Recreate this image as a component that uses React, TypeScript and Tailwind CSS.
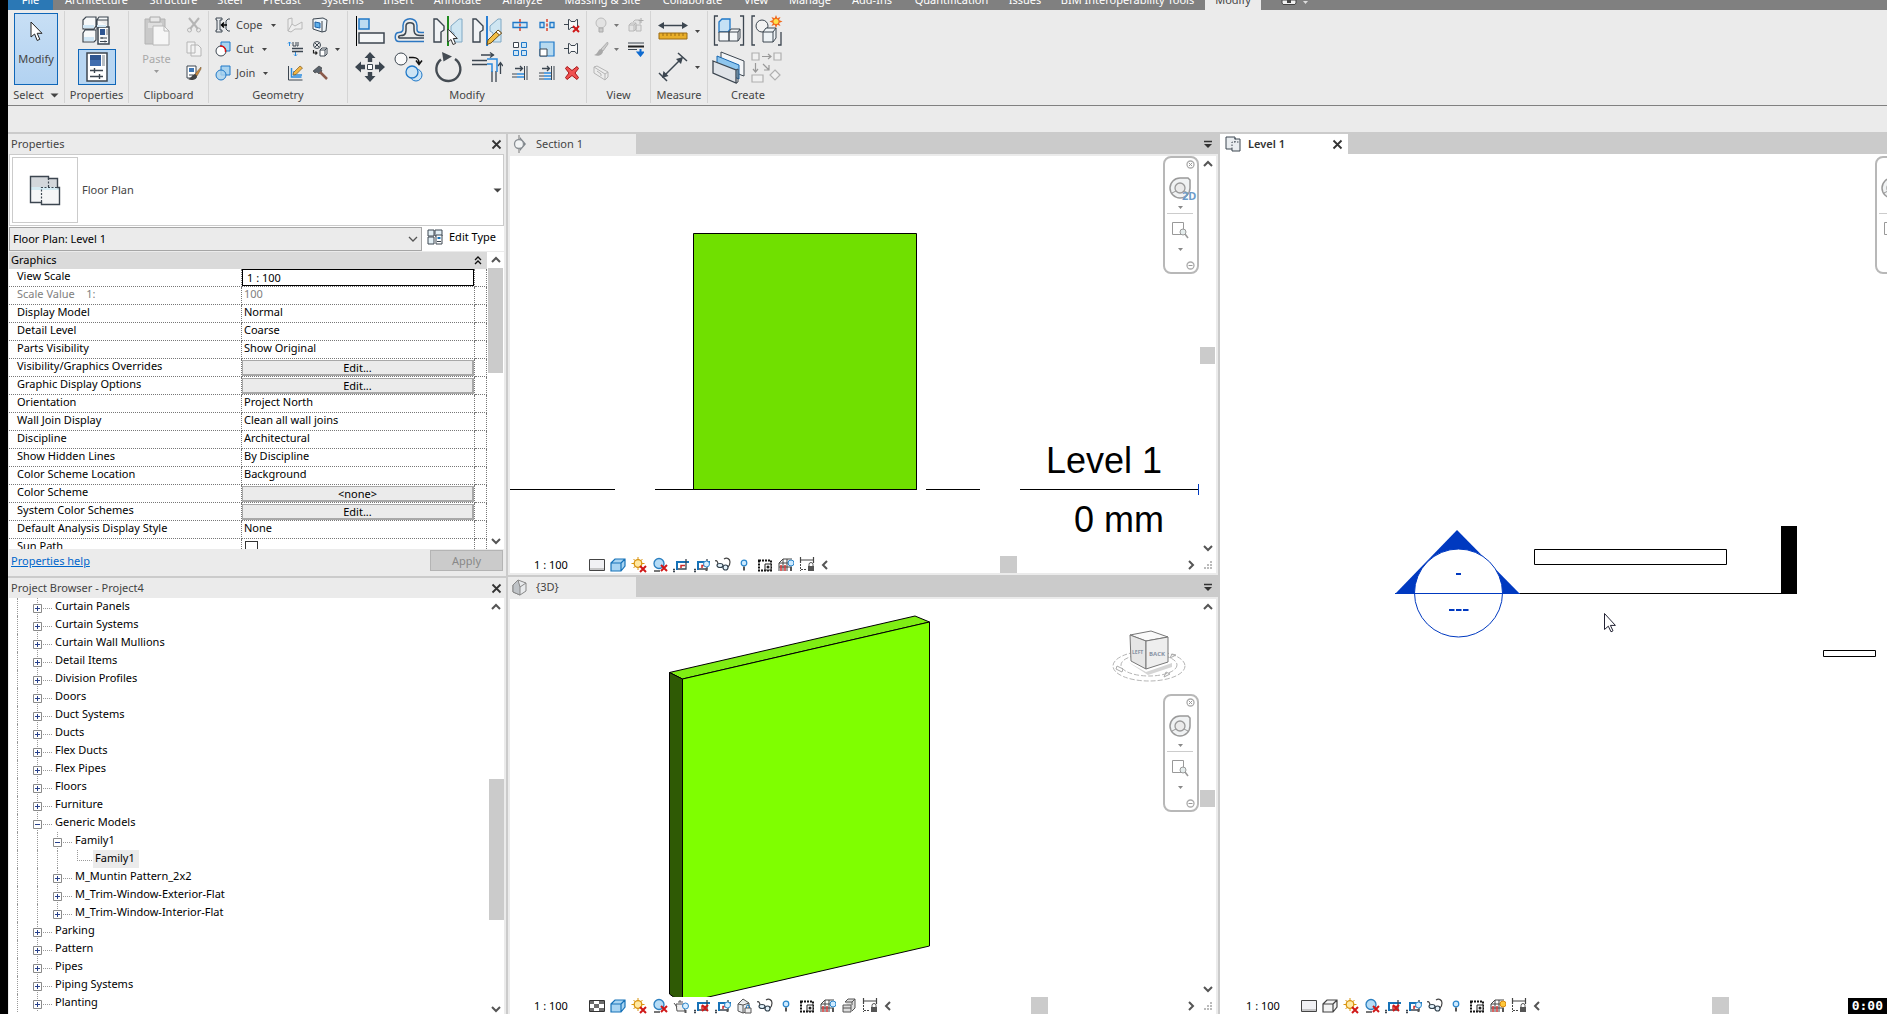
import { Fragment, type ReactNode } from "react"
import clsx from "clsx"

const INK = "#3c4650"
const BLUE = "#1f78c8"
const PALE = "#cfe6f5"

/* ---------- Icon helpers ---------- */

function Icon({ w = 16, h = 16, children }: { w?: number; h?: number; children: ReactNode }) {
  return (
    <svg width={w} height={h} viewBox={`0 0 ${w} ${h}`} fill="none" aria-hidden="true" className="block shrink-0">
      {children}
    </svg>
  )
}

const Caret = ({ color = "#444", big = false }: { color?: string; big?: boolean }) => (
  <Icon w={big ? 9 : 7} h={5}>
    <path d={big ? "M.5 .5h8l-4 4z" : "M1 1h5L3.5 4z"} fill={color} />
  </Icon>
)

const CloseIcon = () => (
  <Icon w={11} h={11}>
    <path d="M1.5 1.5l8 8M9.5 1.5l-8 8" stroke="#333" strokeWidth="1.800" />
  </Icon>
)

const chevrons = {
  up: "M2 8l4-4 4 4",
  down: "M2 4l4 4 4-4",
  left: "M8 2L4 6l4 4",
  right: "M4 2l4 4-4 4",
}

function ScrollArrow({ dir }: { dir: keyof typeof chevrons }) {
  return (
    <button type="button" aria-label={`Scroll ${dir}`} className="flex size-4 shrink-0 items-center justify-center">
      <Icon w={12} h={12}>
        <path d={chevrons[dir]} stroke="#555" strokeWidth="2" />
      </Icon>
    </button>
  )
}

const RedX = ({ x, y, s = 6 }: { x: number; y: number; s?: number }) => (
  <path d={`M${x} ${y}l${s} ${s}M${x + s} ${y}l${-s} ${s}`} stroke="#d01818" strokeWidth="2" />
)

/* ---------- Ribbon icons ---------- */

const ArrowCursor = () => (
  <Icon w={14} h={22}>
    <path d="M2 1v15l3.6-3 2.6 6.500 2.6-1.200-2.600-6H13z" fill="#fff" stroke="#222" />
  </Icon>
)

const TypeProperties = () => (
  <Icon w={32} h={32}>
    <g fill="#f7f9fa" stroke={INK} strokeWidth="1.2">
      <path d="M2 5l3-3h10v9l-2 3H2zM16 5l2-3h9v9M16 5v9h11V5zM2 18l2-3h11v10l-2 2H2z" />
      <path d="M17 12h11v17H17z" strokeWidth="1.5" />
    </g>
    <path d="M2 10h11v3H2zM16 10h9v2h-9zM3 22h10v4H3z" fill={PALE} />
    <path d="M19 14h5v6h-5z" fill="#2e5591" />
    <path d="M25 14h2v6h-2z" fill="#bbb" />
    <path d="M19 23h7M19 26.500h7M21 22v2M24 25.500v2" stroke={INK} />
  </Icon>
)

const PropertiesSheet = () => (
  <Icon w={22} h={30}>
    <path d="M1 1h20v28H1z" fill="#fff" stroke={INK} strokeWidth="1.5" />
    <path d="M4 3h11v11H4z" fill="#2e5591" />
    <path d="M4 8h11v6H4z" fill="#3f6cae" />
    <path d="M16 3h3v11h-3z" fill="#b9bfc5" />
    <path d="M4 18.500h13M4 24.500h13M8.500 16v5M13.500 22v5" stroke={INK} strokeWidth="1.400" />
  </Icon>
)

const PasteIcon = () => (
  <Icon w={28} h={32}>
    <path d="M2 4h20v25H2z" fill="#c9c9c9" stroke="#b3b3b3" />
    <path d="M7 2h10v5H7z" fill="#e8e8e8" stroke="#aaa" />
    <path d="M5 8h14v5H5z" fill="#dedede" />
    <path d="M10 11h11l5 5v14H10z" fill="#f6f6f6" stroke="#b8b8b8" />
    <path d="M21 11v5h5" stroke="#b8b8b8" />
  </Icon>
)

const CutClip = () => (
  <Icon>
    <path d="M3 1l9 11M13 1L4 12" stroke="#b5b5b5" strokeWidth="2" />
    <circle cx="3.500" cy="13" r="2" stroke="#b5b5b5" />
    <circle cx="12.500" cy="13" r="2" stroke="#b5b5b5" />
  </Icon>
)

const CopyClip = () => (
  <Icon>
    <path d="M1 1h8v11H1zM5 4h7l3 3v8H5z" fill="#f3f3f3" stroke="#b5b5b5" />
  </Icon>
)

const MatchType = () => (
  <Icon>
    <path d="M1 1h9v12H1z" fill="#fff" stroke={INK} />
    <path d="M3 3h5v4H3z" fill="#3f77b5" />
    <path d="M3 10h4" stroke={INK} />
    <path d="M15 2L9 9l2 2 4-7z" fill="#c9893e" stroke="#6b5030" strokeWidth=".5" />
    <path d="M9 9c-3 0-3 4-7 5 3 2 9 1 9-3z" fill="#444" />
  </Icon>
)

const CopeIcon = () => (
  <Icon>
    <path d="M1 1h6v2H5v10h2v2H1v-2h1V3H1z" fill="#e6e9ec" stroke={INK} />
    <path d="M15 2h-2l-2 2v8l2 2h2" stroke={INK} />
    <path d="M12 8H7M9 5.500L6.500 8 9 10.500" stroke="#000" strokeWidth="1.500" />
  </Icon>
)

const CutGeo = () => (
  <Icon>
    <path d="M6 1h9v9H6z" fill="#a9d3ef" stroke={BLUE} />
    <circle cx="6" cy="10" r="5" fill="#fff" stroke={INK} />
    <path d="M5 5a5 5 0 015.500 6" stroke="#e01010" strokeWidth="1.500" />
  </Icon>
)

const JoinGeo = () => (
  <Icon>
    <path d="M6 1h9v9H6z" fill="#a9d3ef" stroke={BLUE} />
    <circle cx="6" cy="10" r="5" fill="#a9d3ef" fillOpacity=".8" stroke={BLUE} />
  </Icon>
)

const JoinRoof = () => (
  <Icon>
    <path d="M1 2l4-1v6l3 2 7-4v7H8l-4 3-3-1zM5 7l-4 7" fill="#eee" stroke="#b8b8b8" />
  </Icon>
)

const BeamJoins = () => (
  <Icon>
    <path d="M2.500 5V1M1 2.500L2.500 1 4 2.500M8.500 11v4M7 13.500L8.500 15l1.500-1.500" stroke="#2a8be0" />
    <path d="M6 1v4h3V1M11 1v4h-1" stroke={INK} />
    <path d="M5 7.500h11M5 10.500h11" stroke={INK} strokeWidth="1.500" />
  </Icon>
)

const WallJoins = () => (
  <Icon>
    <path d="M1.500 1v14h14" stroke={INK} />
    <path d="M4.500 3v9h10M7 6v4h8" stroke="#2a8be0" strokeWidth="1.500" />
    <path d="M13 1l2.500 2L9 9.500l-3 .5.500-2.500z" fill="#f2b544" stroke="#7c5a20" strokeWidth=".7" />
  </Icon>
)

const WallOpening = () => (
  <Icon>
    <path d="M1 2l10-1 4 2-1 11-4 1-9-3z" fill="#eef4f8" stroke={INK} />
    <path d="M10 4v11" stroke={INK} />
    <path d="M3 5l5 1v5l-5-1z" fill="#5fb0ea" stroke="#1c5fa5" />
  </Icon>
)

const Unjoin = () => (
  <Icon>
    <circle cx="5" cy="4" r="3.500" stroke={INK} />
    <path d="M3 2l4 4M7 2L3 6" stroke={INK} />
    <path d="M1.500 9v3h3M3.500 10.500L5 12l-1.500 1.500" stroke="#222" strokeWidth="1.200" />
    <path d="M8 9l2-2h5v6l-2 2H8zM8 9h5v6M13 9l2-2" fill="#fff" stroke={INK} />
  </Icon>
)

const Demolish = () => (
  <Icon>
    <path d="M1 6l6-5 3 2-1 1 1 2-3 3-2-2-2 1z" fill="#59626b" stroke="#333" strokeWidth=".6" />
    <path d="M8 7l7 7" stroke="#8a5a4a" strokeWidth="2.500" />
  </Icon>
)

const AlignIcon = () => (
  <Icon w={30} h={32}>
    <path d="M1.500 1v30" stroke="#000" />
    <path d="M4 4h10v10H4z" fill="#bcdcf2" stroke={BLUE} strokeWidth="1.500" />
    <path d="M4 18h25v10H4z" fill="#f4f6f7" stroke={INK} strokeWidth="1.500" />
  </Icon>
)

const OffsetIcon = () => (
  <Icon w={32} h={32}>
    <path d="M31 26.500H6c-5 0-5-9 0-9 5 0 4-4 4-7 0-9 14-9 14 0 0 4-1 7 4 7h3" stroke="#2c77c2" strokeWidth="1.500" />
    <path d="M31 23H7c-2 0-2-2.500 1-2.500 6 0 5-5 5-9.500s8-4.500 8 0-1 9.500 6 9.500h4" stroke={INK} strokeWidth="1.500" />
  </Icon>
)

const MirrorPick = () => (
  <Icon w={32} h={32}>
    <path d="M2 4h3l7 7v4l-3 2v10H2z" fill="#f1f3f5" stroke={INK} strokeWidth="1.400" />
    <path d="M30 4h-3l-8 7v5l3 2v9h8z" fill="#cfe6f2" stroke="#7fa8c4" />
    <path d="M16 1v30" stroke="#1f8a1f" strokeWidth="2" />
    <path d="M16 14v13l3-2.500 2 5 2.500-1-2.200-5h4z" fill="#fff" stroke="#333" />
  </Icon>
)

const MirrorDraw = () => (
  <Icon w={32} h={32}>
    <path d="M2 4h3l7 7v4l-3 2v10H2z" fill="#f1f3f5" stroke={INK} strokeWidth="1.400" />
    <path d="M30 4h-3l-8 7v5l3 2v9h8z" fill="#cfe6f2" stroke="#7fa8c4" />
    <path d="M16 1v30" stroke="#2a7fd4" strokeWidth="2" />
    <path d="M27 15l3.500 3L20 28l-4 1.500 1-4.500z" fill="#f3bf45" stroke="#6e4e18" />
    <path d="M27 15l3.500 3-2 2-3.500-3z" fill="#fff" stroke="#6e4e18" />
  </Icon>
)

const MoveIcon = () => (
  <Icon w={32} h={32}>
    <path
      d="M16 1l5.500 6h-3.300v4h-4.400V7h-3.300zM16 31l5.500-6h-3.300v-4h-4.400v4h-3.300zM1 16l6-5.500v3.300h4v4.400H7v3.300zM31 16l-6-5.500v3.300h-4v4.400h4v3.300z"
      fill={INK}
    />
    <path d="M13.500 13.500h5v5h-5z" fill="#fff" stroke={INK} />
  </Icon>
)

const CopyIcon = () => (
  <Icon w={32} h={32}>
    <circle cx="8" cy="8" r="6" fill="#fafafa" stroke={INK} />
    <path d="M16 6.500h4c5 0 6 2 6 6M23 9.500l3 4 3-4" stroke="#111" strokeWidth="1.500" />
    <circle cx="23" cy="24" r="6" fill="#cce4f5" stroke={BLUE} />
    <circle cx="19" cy="21" r="6" fill="#cce4f5" stroke={BLUE} strokeWidth="1.300" />
  </Icon>
)

const RotateIcon = () => (
  <Icon w={32} h={32}>
    <path d="M9 8.500A12 12 0 1023 8" stroke="#454c53" strokeWidth="2.400" />
    <path d="M10 1l10 4.500-8.500 5z" fill="#454c53" />
  </Icon>
)

const TrimCorner = () => (
  <Icon w={32} h={32}>
    <path d="M1 9.500h15M1 13.500h15" stroke={INK} strokeWidth="1.400" />
    <path d="M10 4h13M19 1.500L22.500 4 19 6.500M29.500 23V12M27 15l2.500-3.500L32 15M21 20v11M25 20v11" stroke={INK} strokeWidth="1.300" />
    <path d="M16 8h10v13M16 13h5v8" stroke="#2a8be0" strokeWidth="1.500" />
  </Icon>
)

const SplitIcon = ({ gap = false }: { gap?: boolean }) => (
  <Icon>
    <path d={gap ? "M1 5.500h4v5H1zM11 5.500h4v5h-4z" : "M1 5.500h14v5H1z"} fill={PALE} stroke={BLUE} strokeWidth="1.300" />
    <path d="M8 2v12" stroke="#d9432f" strokeWidth="1.500" strokeDasharray="3 1.500" />
  </Icon>
)

const ArrayIcon = () => (
  <Icon>
    <path d="M1.500 1.500h5v5h-5z" stroke={INK} fill="#fff" />
    <path d="M9.500 1.500h5v5h-5zM1.500 9.500h5v5h-5zM9.500 9.500h5v5h-5z" fill={PALE} stroke={BLUE} />
  </Icon>
)

const ScaleIcon = () => (
  <Icon>
    <path d="M1 1h14v14H1z" fill="#b7daf0" stroke={BLUE} strokeWidth="1.200" />
    <path d="M1 8h7v7H1z" fill="#fff" stroke={INK} />
  </Icon>
)

const TrimExtend = ({ multi = false }: { multi?: boolean }) => (
  <Icon>
    <path d="M3 3.500h7M8 1l2.500 2.500L8 6" stroke={INK} strokeWidth="1.300" />
    <path d={multi ? "M0 8h5M0 11h5M0 14h5" : "M0 9h5M0 12h5"} stroke={INK} />
    <path d={multi ? "M5 8h7M5 11h7M5 14h7" : "M5 9h7M5 12h7"} stroke="#2a8be0" strokeWidth="1.300" />
    <path d="M12.500 1v14M15 1v14" stroke={INK} />
  </Icon>
)

const PinIcon = ({ off = false }: { off?: boolean }) => (
  <Icon>
    <path d="M0 7.500h5" stroke={INK} />
    <path d="M4.500 2.500h1l1.500 2h4l1.500-2h1v10h-1l-1.500-2H7l-1.500 2h-1z" fill="#f6f6f6" stroke={INK} />
    {off && <RedX x={9} y={9} s={6} />}
  </Icon>
)

const DeleteIcon = () => (
  <Icon>
    <path d="M3 1.500l5 4 5-4 1.500 2L11 8l3.500 4.500-1.500 2-5-4-5 4-1.500-2L5 8 1.500 3.500z" fill="#f05050" stroke="#a51515" />
  </Icon>
)

const GrayBulb = () => (
  <Icon>
    <circle cx="8" cy="6" r="5" fill="#e3e3e3" stroke="#bcbcbc" />
    <path d="M6 11h4v4H6z" fill="#ccc" stroke="#aaa" />
  </Icon>
)

const GrayBrush = () => (
  <Icon>
    <path d="M14.500 1L8 8l2 2 5-7z" fill="#ccc" stroke="#b0b0b0" />
    <path d="M8 8c-3 0-3 5-7 6 4 2 9 0 9-4z" fill="#a8a8a8" />
  </Icon>
)

const GrayWall = () => (
  <Icon>
    <path d="M1 2l3-1 11 6v5l-3 3-11-7zM1 2l11 7v6M12 9l3-2M4 6l4 3v2" fill="#ececec" stroke="#b5b5b5" />
  </Icon>
)

const GrayBoxes = () => (
  <Icon>
    <path d="M1 8l2-2h5v6l-2 2H1zM1 8h5v6M6 8l2-2M8 8h5v6H8zM5 5l2-2h5v4" fill="#e4e4e4" stroke="#b8b8b8" />
    <path d="M13 1v5M10.500 3.500h5" stroke="#aaa" />
  </Icon>
)

const LineworkIcon = () => (
  <Icon>
    <path d="M0 2h16" stroke={INK} />
    <path d="M0 5.500h16" stroke="#222" strokeWidth="2" />
    <path d="M0 8.500h9" stroke={INK} />
    <path d="M12.500 8v6M10 11.500l2.500 3 2.500-3z" stroke="#0f6bd0" strokeWidth="2" />
  </Icon>
)

const MeasureIcon = () => (
  <Icon w={30} h={28}>
    <path d="M3 8.500h24" stroke={INK} strokeWidth="1.500" />
    <path d="M0 8.500L6 5v7zM30 8.500L24 5v7z" fill={INK} />
    <path d="M1 16h28v6H1z" fill="#e9ae28" stroke="#9b6a12" />
    <path d="M5 16v3M9 16v3M13 16v3M17 16v3M21 16v3M25 16v3" stroke="#9b6a12" />
  </Icon>
)

const DimensionIcon = () => (
  <Icon w={30} h={30}>
    <path d="M5 25L24 6M1 21l8 8M20 1l9 8" stroke={INK} strokeWidth="1.500" />
    <path d="M4 26l1.500-7 5 5zM25 5l-7 2 5 5z" fill={INK} />
  </Icon>
)

const CreateGroup = () => (
  <Icon w={32} h={32}>
    <path d="M5 1H1.500v29H5M27 1h3.500v29H27" stroke={INK} strokeWidth="1.300" />
    <path d="M6 7l3-3h8v10l-2 3H6z" fill="#c4e1f5" stroke={BLUE} strokeWidth="1.300" />
    <path d="M6 17h10v9H6zM16 17l2-3h9v9l-2 3h-9z" fill="#f3f6f8" stroke={INK} />
    <path d="M16 17h9v9M25 17l2-3" stroke={INK} />
  </Icon>
)

const CreateAssembly = () => (
  <Icon w={32} h={32}>
    <path d="M4 1H1v29h3M27 30h3V17" stroke={INK} strokeWidth="1.300" />
    <circle cx="11" cy="11" r="6" fill="#f2f2f2" stroke={INK} />
    <path d="M12 17l3-4h10v10l-3 4H12zM12 17h10v10M22 17l3-4" fill="#eef3f6" stroke={INK} />
    <path d="M25 0l1.300 3.200L29.500 2 28 5l3.500 1.500L28 8l1.500 3-3.200-1.200L25 13l-1.300-3.200L20.500 11 22 8l-3.500-1.500L22 5l-1.500-3 3.200 1.200z" fill="#f06a1c" />
    <circle cx="25" cy="6.500" r="2.500" fill="#ffe14a" />
  </Icon>
)

const CreateParts = () => (
  <Icon w={34} h={34}>
    <path d="M9 2l23 9v15l-3-1L9 15z" fill="#f4f6f8" stroke={INK} />
    <path d="M5 6l22 9v14L5 20z" fill="#8ec6ee" stroke="#1766b0" />
    <path d="M1 11l23 9v13L1 23z" fill="#dfe3e8" stroke={INK} strokeWidth="1.300" />
    <path d="M24 20l2-1v13l-2 1" stroke={INK} />
  </Icon>
)

const CreateSimilar = () => (
  <Icon w={32} h={32}>
    <g stroke="#b0b0b0" strokeWidth="1.200">
      <path d="M1 2h7v7H1zM23 2h7v7h-7zM1 24h11v7H1zM24 19l5 5-5 5-5-5z" fill="#f0f0f0" />
      <path d="M11 5.500h9M17 3l3 2.500L17 8M4.500 12v9M2 18l2.500 3L7 18M12 13l6 6M18 14v5h-5" stroke="#999" />
    </g>
  </Icon>
)

/* ---------- View control icons ---------- */

const DetailBox = () => (
  <Icon>
    <path d="M.5 2.500h15v11H.5z" fill="#f1f1f4" stroke="#444" />
    <path d="M1 12h14" stroke="#999" />
  </Icon>
)

const CheckerBox = () => (
  <Icon>
    <path d="M.5 2.500h15v11H.5z" fill="#fff" stroke="#333" />
    <path d="M1 3h4v3H1zM10 3h5v3h-5zM5 6h5v4H5zM1 10h4v3H1zM10 10h5v3h-5z" fill="#6d6d6d" />
  </Icon>
)

const StyleCube = ({ plain = false }: { plain?: boolean }) => (
  <Icon>
    <path
      d="M1 6l4-4h10v7l-4 5H1zM1 6h10v8M11 6l4-4"
      fill={plain ? "#f4f4f4" : "#a8d4f2"}
      stroke={plain ? "#444" : "#1672b8"}
      strokeWidth="1.200"
    />
  </Icon>
)

const SunOff = () => (
  <Icon>
    <path d="M7 0v13M.5 6.500h13M2.500 2l9 9M11.500 2l-9 9" stroke="#d9940f" />
    <circle cx="7" cy="6.500" r="3.800" fill="#ffe9a3" stroke="#d9940f" strokeWidth="1.300" />
    <RedX x={9} y={9} />
  </Icon>
)

const ShadowOff = () => (
  <Icon>
    <path d="M2 14h6" stroke="#777" strokeWidth="2" />
    <circle cx="7" cy="6.500" r="5" fill="#b6dcf6" stroke="#2a7fc0" strokeWidth="1.300" />
    <RedX x={9} y={8} />
  </Icon>
)

const CropView = ({ mark }: { mark?: "x" | "bulb" }) => (
  <Icon>
    <path d="M4 13V5h12" stroke="#1672b8" strokeWidth="2" />
    <path d="M8 11V8.500h4" stroke="#cc2a2a" strokeWidth="1.500" />
    <path d="M13 2v10H5M0 12.500h2M0 14.500h2" stroke={INK} strokeWidth="1.300" />
    {mark === "x" && <RedX x={8} y={7} />}
    {mark === "bulb" && (
      <Fragment>
        <circle cx="12.500" cy="7" r="3" fill="#d8efff" stroke="#2a86cc" />
        <path d="M12.500 11v3" stroke="#555" strokeWidth="2" />
      </Fragment>
    )}
  </Icon>
)

const Glasses = () => (
  <Icon>
    <path d="M0 4c2-1 3 1 3 4M9 2c3-2 6 0 6 3 0 2-1 4-2 5" stroke="#444" strokeWidth="1.200" />
    <ellipse cx="5" cy="8.500" rx="3" ry="2" fill="#e4f2fb" stroke="#33424e" strokeWidth="1.200" />
    <ellipse cx="10.500" cy="10.500" rx="2.500" ry="2.500" fill="#e4f2fb" stroke="#33424e" strokeWidth="1.200" />
  </Icon>
)

const BlueBulb = () => (
  <Icon>
    <circle cx="8" cy="6" r="2.800" fill="#cdeaff" stroke="#2a86cc" strokeWidth="1.200" />
    <path d="M8 9.500v4" stroke="#555" strokeWidth="2" />
  </Icon>
)

const Chip = () => (
  <Icon>
    <path d="M2 3.500h12v10H2z" stroke="#111" strokeWidth="2" strokeDasharray="2 1" />
    <path d="M8 7h6v6H8z" fill="#fff" stroke="#222" />
    <circle cx="11" cy="10" r="1.500" fill="#222" />
  </Icon>
)

const FrameGrid = ({ lit = false }: { lit?: boolean }) => (
  <Icon>
    <path d="M1 14V6l4-4h9M5 14V2M9 14V2M1 6h13M1 10h13" stroke="#444" />
    <path d="M3 8v6M7 8v6" stroke="#d03030" strokeWidth="1.500" />
    <circle cx="13" cy="6" r="3" fill={lit ? "#ffc83a" : "#cdeaff"} stroke={lit ? "#d98a10" : "#2a86cc"} />
    <path d="M13 10v4" stroke="#555" strokeWidth="2" />
  </Icon>
)

const Constraints = () => (
  <Icon>
    <path d="M1.500 0v6M14.500 0v6M1.500 3h13" stroke="#444" strokeWidth="1.200" />
    <path d="M1.500 7v7M2 12.500h6" stroke="#444" strokeDasharray="2 1" />
    <path d="M9 9h6v5H9z" fill="#555" />
    <path d="M10 9V7.500a2 2 0 014 0V9" stroke="#555" />
  </Icon>
)

const Teapot = () => (
  <Icon>
    <path d="M3 6h8l1 7H4zM1 5l3 4M5 4h5M7 2v2" fill="#eee" stroke="#555" />
    <circle cx="12.500" cy="8" r="3" fill="#d8efff" stroke="#2a86cc" />
    <path d="M12.500 12v3" stroke="#555" strokeWidth="2" />
  </Icon>
)

const HouseLock = () => (
  <Icon>
    <path d="M2 6l5-5 6 4v8l-6 2-5-2zM7 7v8M2 6l5 1 6-2" fill="#e8ebee" stroke="#555" />
    <path d="M9 10h6v5H9z" fill="#eee" stroke="#555" />
    <path d="M10.500 10V8.500a1.500 1.500 0 013 0V10" stroke="#1672b8" />
  </Icon>
)

const StackedBoxes = () => (
  <Icon>
    <path d="M4 4l3-3h7v9l-3 3M4 4h7v3M11 4l3-3M2 7h8v7H2zM2 10h8" fill="#ddd" stroke="#555" />
  </Icon>
)

const SectionTabIcon = () => (
  <Icon w={16} h={18}>
    <path d="M8 2l6 7-6 7z" fill="#7f858b" />
    <path d="M7 0v18" stroke="#777" />
    <circle cx="7" cy="9" r="4.500" fill="#f1f3f4" stroke="#8b9095" strokeWidth="1.300" />
  </Icon>
)

const HouseTabIcon = () => (
  <Icon w={16} h={18}>
    <path d="M1 7l5-5 8 3v8l-6 4-7-3z" fill="#e8eaec" stroke="#888" />
    <path d="M1 7l5-5 2 7v8l-7-3z" fill="#bfc3c7" stroke="#888" />
    <path d="M8 9l6-4" stroke="#888" />
  </Icon>
)

const PlanTabIcon = () => (
  <Icon w={16} h={18}>
    <path d="M1 2h9v2h5v12H7v-2H1z" fill="#e9edf0" stroke={INK} />
    <path d="M7 14V7h8M10 3v4" stroke={INK} strokeDasharray="1.500 1.500" />
  </Icon>
)

const PlanThumb = () => (
  <Icon w={32} h={32}>
    <path d="M1.500 2.500h18v2h9v9h2v17h-18v-2h-11z" fill="#f5f6f7" />
    <path d="M2 3h17v2h9v8H2z" fill="#d3d7db" />
    <path d="M2 13h28v3H2z" fill="#d5ebf3" />
    <path d="M12.500 28.500h-11v-26h18v2h9v9h2v17h-18z" stroke={INK} strokeWidth="1.400" />
    <path d="M12.500 28V13.500H29M19.500 4v9" stroke={INK} strokeWidth="1.200" strokeDasharray="2 1.500" />
  </Icon>
)

const EditTypeIcon = () => (
  <Icon>
    <path d="M1 1h6v6H1zM8 1h7v6H8zM1 8h6v7H1z" fill="#e3eff5" stroke={INK} />
    <path d="M9 6h6v9H9z" fill="#fff" stroke={INK} />
    <path d="M10.500 8h3v2h-3z" fill="#1672b8" />
    <path d="M10 12.500h4" stroke={INK} />
  </Icon>
)

/* ---------- Ribbon ---------- */

const tabs = [
  { name: "Architecture", width: "w-[87px]" },
  { name: "Structure", width: "w-[67px]" },
  { name: "Steel", width: "w-[46px]" },
  { name: "Precast", width: "w-[58px]" },
  { name: "Systems", width: "w-[63px]" },
  { name: "Insert", width: "w-[49px]" },
  { name: "Annotate", width: "w-[69px]" },
  { name: "Analyze", width: "w-[61px]" },
  { name: "Massing & Site", width: "w-[99px]" },
  { name: "Collaborate", width: "w-[81px]" },
  { name: "View", width: "w-[46px]" },
  { name: "Manage", width: "w-[62px]" },
  { name: "Add-Ins", width: "w-[62px]" },
  { name: "Quantification", width: "w-[97px]" },
  { name: "Issues", width: "w-[50px]" },
  { name: "BIM Interoperability Tools", width: "w-[155px]" },
]

function RibbonTabs() {
  return (
    <nav className="flex h-[10px] shrink-0 items-end overflow-hidden bg-[#808080] text-white">
      <button type="button" className="w-[45px] shrink-0 bg-[#2b78b5] pb-[2px] text-center">
        File
      </button>
      {tabs.map((tab) => (
        <button key={tab.name} type="button" className={clsx("shrink-0 pb-[2px] text-center whitespace-nowrap", tab.width)}>
          {tab.name}
        </button>
      ))}
      <button type="button" className="w-14 shrink-0 bg-[#ebebeb] pb-[2px] text-center text-[#444]">
        Modify
      </button>
      <button type="button" aria-label="Ribbon display" className="ml-5 flex items-center gap-1 self-start">
        <Icon w={17} h={5}>
          <path d="M1 0v3l1 1.500h12l1-1.500V0z" fill="#f2f2f2" stroke="#444" />
          <path d="M6 0h4v3H6z" fill="#444" />
        </Icon>
        <Caret color="#ddd" />
      </button>
    </nav>
  )
}

function RibbonGroup({ title, width, children }: { title: ReactNode; width: string; children: ReactNode }) {
  return (
    <section className={clsx("flex shrink-0 flex-col pt-[3px]", width)}>
      <div className="flex h-[72px] justify-center">{children}</div>
      <h2 className="flex h-5 items-center justify-center gap-[6px] text-[#444]">{title}</h2>
    </section>
  )
}

const Divider = () => <div className="mt-px h-[92px] w-px shrink-0 bg-[#d4d4d4]" />

function Tool({ label, children, className }: { label: string; children: ReactNode; className?: string }) {
  return (
    <button type="button" aria-label={label} title={label} className={clsx("flex items-center justify-center", className)}>
      {children}
    </button>
  )
}

function GeometryRow({ label, children }: { label: string; children: ReactNode }) {
  return (
    <button type="button" className="flex items-center gap-[5px] text-[#444]">
      {children}
      <span>{label}</span>
      <span className="pl-[2px]">
        <Caret />
      </span>
    </button>
  )
}

function Ribbon() {
  return (
    <div className="flex h-24 shrink-0 overflow-hidden border-b border-[#808080]">
      <RibbonGroup title={<Fragment>Select <Caret big /></Fragment>} width="w-14">
        <button
          type="button"
          className="flex w-11 flex-col items-center gap-[8px] border border-[#0f66b8] bg-gradient-to-b from-[#c8dff5] to-[#b2d2f1] pt-[7px] text-[#444]"
        >
          <ArrowCursor />
          Modify
        </button>
      </RibbonGroup>
      <Divider />
      <RibbonGroup title="Properties" width="w-[63px]">
        <div className="grid w-[38px] grid-rows-2">
          <Tool label="Type Properties">
            <TypeProperties />
          </Tool>
          <Tool label="Properties" className="border border-[#0f66b8] bg-[#b8d6f2]">
            <PropertiesSheet />
          </Tool>
        </div>
      </RibbonGroup>
      <Divider />
      <RibbonGroup title="Clipboard" width="w-[79px]">
        <button type="button" className="flex w-[51px] flex-col items-center pt-[2px] text-[#a9a9a9]">
          <PasteIcon />
          <span className="pt-1 pb-[2px]">Paste</span>
          <Caret color="#999" />
        </button>
        <div className="grid w-6 grid-rows-3">
          <Tool label="Cut to Clipboard"><CutClip /></Tool>
          <Tool label="Copy to Clipboard"><CopyClip /></Tool>
          <Tool label="Match Type Properties"><MatchType /></Tool>
        </div>
      </RibbonGroup>
      <Divider />
      <RibbonGroup title="Geometry" width="w-[138px]">
        <div className="grid w-[68px] grid-rows-3">
          <GeometryRow label="Cope"><CopeIcon /></GeometryRow>
          <GeometryRow label="Cut"><CutGeo /></GeometryRow>
          <GeometryRow label="Join"><JoinGeo /></GeometryRow>
        </div>
        <div className="grid w-6 grid-rows-3">
          <Tool label="Join Roof"><JoinRoof /></Tool>
          <Tool label="Beam Joins"><BeamJoins /></Tool>
          <Tool label="Wall Joins"><WallJoins /></Tool>
        </div>
        <div className="grid w-[34px] grid-rows-3 pl-[5px]">
          <Tool label="Wall Opening" className="justify-start"><WallOpening /></Tool>
          <Tool label="Unjoin" className="justify-start gap-[6px]"><Unjoin /><Caret /></Tool>
          <Tool label="Demolish" className="justify-start"><Demolish /></Tool>
        </div>
      </RibbonGroup>
      <Divider />
      <RibbonGroup title="Modify" width="w-[238px]">
        <div className="grid grid-cols-[39px_39px_39px_39px] grid-rows-2">
          <Tool label="Align"><AlignIcon /></Tool>
          <Tool label="Offset"><OffsetIcon /></Tool>
          <Tool label="Mirror - Pick Axis"><MirrorPick /></Tool>
          <Tool label="Mirror - Draw Axis"><MirrorDraw /></Tool>
          <Tool label="Move"><MoveIcon /></Tool>
          <Tool label="Copy"><CopyIcon /></Tool>
          <Tool label="Rotate"><RotateIcon /></Tool>
          <Tool label="Trim to Corner"><TrimCorner /></Tool>
        </div>
        <div className="grid grid-cols-[28px_25px_25px] grid-rows-3">
          <Tool label="Split Element"><SplitIcon /></Tool>
          <Tool label="Split with Gap"><SplitIcon gap /></Tool>
          <Tool label="Unpin"><PinIcon off /></Tool>
          <Tool label="Array"><ArrayIcon /></Tool>
          <Tool label="Scale"><ScaleIcon /></Tool>
          <Tool label="Pin"><PinIcon /></Tool>
          <Tool label="Trim Single"><TrimExtend /></Tool>
          <Tool label="Trim Multiple"><TrimExtend multi /></Tool>
          <Tool label="Delete"><DeleteIcon /></Tool>
        </div>
      </RibbonGroup>
      <Divider />
      <RibbonGroup title="View" width="w-[63px]">
        <div className="grid w-[35px] grid-rows-3 pl-1">
          <Tool label="Hide in View" className="justify-start gap-1"><GrayBulb /><Caret color="#777" /></Tool>
          <Tool label="Override Graphics" className="justify-start gap-1"><GrayBrush /><Caret color="#777" /></Tool>
          <Tool label="Selection Box" className="justify-start"><GrayWall /></Tool>
        </div>
        <div className="grid w-6 grid-rows-3">
          <Tool label="Displace Elements"><GrayBoxes /></Tool>
          <Tool label="Linework"><LineworkIcon /></Tool>
        </div>
      </RibbonGroup>
      <Divider />
      <RibbonGroup title="Measure" width="w-14">
        <div className="grid grid-rows-2">
          <Tool label="Measure" className="gap-[6px]"><MeasureIcon /><Caret /></Tool>
          <Tool label="Dimension" className="gap-[6px]"><DimensionIcon /><Caret /></Tool>
        </div>
      </RibbonGroup>
      <Divider />
      <RibbonGroup title="Create" width="w-20">
        <div className="grid grid-cols-[38px_38px] grid-rows-2">
          <Tool label="Create Group"><CreateGroup /></Tool>
          <Tool label="Create Assembly"><CreateAssembly /></Tool>
          <Tool label="Create Parts"><CreateParts /></Tool>
          <Tool label="Create Similar"><CreateSimilar /></Tool>
        </div>
      </RibbonGroup>
    </div>
  )
}

/* ---------- Properties palette ---------- */

function PanelHeader({ title }: { title: string }) {
  return (
    <header className="flex h-5 shrink-0 items-center justify-between pr-1 pl-[3px]">
      <h2 className="text-[#444]">{title}</h2>
      <button type="button" aria-label={`Close ${title}`}>
        <CloseIcon />
      </button>
    </header>
  )
}

type Property = { label: string; value: string; kind?: "input" | "button" | "check" | "disabled" }

const properties: Property[] = [
  { label: "View Scale", value: "1 : 100", kind: "input" },
  { label: "Scale Value    1:", value: "100", kind: "disabled" },
  { label: "Display Model", value: "Normal" },
  { label: "Detail Level", value: "Coarse" },
  { label: "Parts Visibility", value: "Show Original" },
  { label: "Visibility/Graphics Overrides", value: "Edit...", kind: "button" },
  { label: "Graphic Display Options", value: "Edit...", kind: "button" },
  { label: "Orientation", value: "Project North" },
  { label: "Wall Join Display", value: "Clean all wall joins" },
  { label: "Discipline", value: "Architectural" },
  { label: "Show Hidden Lines", value: "By Discipline" },
  { label: "Color Scheme Location", value: "Background" },
  { label: "Color Scheme", value: "<none>", kind: "button" },
  { label: "System Color Schemes", value: "Edit...", kind: "button" },
  { label: "Default Analysis Display Style", value: "None" },
  { label: "Sun Path", value: "", kind: "check" },
]

function PropertyValue({ property, id }: { property: Property; id: string }) {
  if (property.kind === "input") {
    return (
      <input
        id={id}
        defaultValue={property.value}
        className="block h-[17px] w-full border border-black bg-white px-1 pb-px leading-[14px]"
      />
    )
  }
  if (property.kind === "button") {
    return (
      <button
        id={id}
        type="button"
        className="block h-4 w-full border border-r-2 border-b-2 border-[#a8a8a8] bg-[#ebebeb] text-center leading-[14px]"
      >
        {property.value}
      </button>
    )
  }
  if (property.kind === "check") {
    return <input id={id} type="checkbox" className="ml-[3px] block size-[13px] appearance-none border border-[#333] bg-white" />
  }
  return <span className="block h-[17px] pl-[2px] leading-[14px]">{property.value}</span>
}

function PropertiesPanel() {
  return (
    <section className="flex min-h-0 flex-[443] basis-0 flex-col">
      <PanelHeader title="Properties" />
      <button
        type="button"
        className="ml-px flex h-[72px] w-[495px] shrink-0 items-center border border-[#cbcbcb] bg-white pr-px pl-[2px] text-[#444]"
      >
        <span className="flex size-[66px] items-center justify-center border border-[#cbcbcb]">
          <PlanThumb />
        </span>
        <span className="flex-1 pl-1 text-left">Floor Plan</span>
        <Caret big />
      </button>
      <div className="ml-px flex w-[495px] shrink-0 gap-px border-b border-[#ebebeb] bg-white pt-px">
        <div className="relative h-6 w-[413px]">
          <select aria-label="View instance" className="block size-full appearance-none border border-[#a6a6a6] bg-[#ebebeb] px-[3px]">
            <option>Floor Plan: Level 1</option>
          </select>
          <span className="pointer-events-none absolute top-[7px] right-1">
            <Icon w={10} h={10}>
              <path d="M1 3l4 4 4-4" stroke="#555" strokeWidth="1.300" />
            </Icon>
          </span>
        </div>
        <button type="button" className="flex flex-1 items-center gap-[6px] pb-1 pl-1">
          <EditTypeIcon />
          Edit Type
        </button>
      </div>
      <div className="ml-px flex min-h-0 w-[495px] flex-1 bg-white">
        <div className="w-[478px] overflow-hidden">
          <button
            type="button"
            className="flex h-[17px] w-full items-center justify-between bg-[#dadada] pr-[5px] pb-[2px] pl-[2px] leading-[14px]"
          >
            Graphics
            <Icon w={8} h={10}>
              <path d="M1 5l3-3 3 3M1 9l3-3 3 3" stroke="#111" strokeWidth="1.300" />
            </Icon>
          </button>
          <table className="w-full table-fixed border-separate border-spacing-0">
            <colgroup>
              <col className="w-[233px]" />
              <col className="w-[233px]" />
              <col className="w-3" />
            </colgroup>
            <tbody>
              {properties.map((property, i) => (
                <tr key={property.label} className={clsx("h-[18px]", property.kind === "disabled" && "text-[#808080]")}>
                  <th scope="row" className="border-r border-b border-dotted border-[#777] p-0 pl-2 text-left font-normal">
                    <label htmlFor={`prop-${i}`} className="block h-[17px] leading-[14px] whitespace-pre">
                      {property.label}
                    </label>
                  </th>
                  <td className="border-r border-b border-dotted border-[#777] p-0">
                    <PropertyValue property={property} id={`prop-${i}`} />
                  </td>
                  <td className="border-r border-b border-dotted border-[#777] p-0" />
                </tr>
              ))}
            </tbody>
          </table>
        </div>
        <div className="flex w-[17px] flex-col items-center">
          <ScrollArrow dir="up" />
          <div className="flex w-full flex-1 justify-center">
            <div className="h-[105px] w-[15px] bg-[#cbcbcb]" />
          </div>
          <ScrollArrow dir="down" />
        </div>
      </div>
      <footer className="flex h-[27px] shrink-0 items-center justify-between pr-[3px] pb-1 pl-[3px]">
        <a href="#help" className="text-[#0066cc] underline">
          Properties help
        </a>
        <button type="button" disabled className="h-[21px] w-[73px] border border-[#b4b4b4] bg-[#cbcbcb] text-[#888]">
          Apply
        </button>
      </footer>
    </section>
  )
}

/* ---------- Project browser ---------- */

type Node = { name: string; depth: number; state: "open" | "closed" | "leaf"; last?: boolean }

const nodes: Node[] = [
  { name: "Curtain Panels", depth: 0, state: "closed" },
  { name: "Curtain Systems", depth: 0, state: "closed" },
  { name: "Curtain Wall Mullions", depth: 0, state: "closed" },
  { name: "Detail Items", depth: 0, state: "closed" },
  { name: "Division Profiles", depth: 0, state: "closed" },
  { name: "Doors", depth: 0, state: "closed" },
  { name: "Duct Systems", depth: 0, state: "closed" },
  { name: "Ducts", depth: 0, state: "closed" },
  { name: "Flex Ducts", depth: 0, state: "closed" },
  { name: "Flex Pipes", depth: 0, state: "closed" },
  { name: "Floors", depth: 0, state: "closed" },
  { name: "Furniture", depth: 0, state: "closed" },
  { name: "Generic Models", depth: 0, state: "open" },
  { name: "Family1", depth: 1, state: "open" },
  { name: "Family1", depth: 2, state: "leaf", last: true },
  { name: "M_Muntin Pattern_2x2", depth: 1, state: "closed" },
  { name: "M_Trim-Window-Exterior-Flat", depth: 1, state: "closed" },
  { name: "M_Trim-Window-Interior-Flat", depth: 1, state: "closed", last: true },
  { name: "Parking", depth: 0, state: "closed" },
  { name: "Pattern", depth: 0, state: "closed" },
  { name: "Pipes", depth: 0, state: "closed" },
  { name: "Piping Systems", depth: 0, state: "closed" },
  { name: "Planting", depth: 0, state: "closed" },
]

function TreeToggle({ node }: { node: Node }) {
  const end = node.last ? 10 : 18
  return (
    <Icon w={24} h={18}>
      <path d={`M8.5 0V${end}M8 10.500H24`} stroke="#999" strokeDasharray="1 1" />
      {node.state !== "leaf" && (
        <Fragment>
          <path d="M4.500 6.500h8v8h-8z" fill="#fff" stroke="#8a8a8a" />
          <path d={node.state === "closed" ? "M6 10.500h5M8.500 8v5" : "M6 10.500h5"} stroke="#27408b" />
        </Fragment>
      )}
    </Icon>
  )
}

function ProjectBrowser() {
  return (
    <section className="flex min-h-0 flex-[437] basis-0 flex-col">
      <PanelHeader title="Project Browser - Project4" />
      <div className="ml-px flex min-h-0 w-[495px] flex-1 bg-white">
        <ul className="flex-1 overflow-hidden">
          {nodes.map((node, i) => (
            <li key={i} className="flex h-[18px]">
              {Array.from({ length: node.depth + 1 }, (_, level) => (
                <span key={level} className="w-5 shrink-0 pl-2">
                  <span className="block h-full border-l border-dotted border-[#999]" />
                </span>
              ))}
              <button type="button" className="flex h-[18px]">
                <TreeToggle node={node} />
                <span className={clsx("h-[18px] pr-1 pl-[2px]", node.state === "leaf" && "bg-[#ebebeb]")}>{node.name}</span>
              </button>
            </li>
          ))}
        </ul>
        <div className="-mb-[3px] flex w-4 flex-col items-center pt-px">
          <ScrollArrow dir="up" />
          <div className="flex w-full flex-1 flex-col items-end">
            <div className="flex-[165] basis-0" />
            <div className="h-[141px] w-[15px] bg-[#cbcbcb]" />
            <div className="flex-[81] basis-0" />
          </div>
          <ScrollArrow dir="down" />
        </div>
      </div>
    </section>
  )
}

/* ---------- Views ---------- */

const NavDot = ({ minus = false }: { minus?: boolean }) => (
  <Icon w={9} h={9}>
    <circle cx="4.500" cy="4.500" r="3.500" stroke="#aaa" strokeWidth="1.300" />
    <path d={minus ? "M2.500 4.500h4" : "M3 3l3 3M6 3L3 6"} stroke="#999" />
  </Icon>
)

function NavigationBar({ flat = false, offscreen = false }: { flat?: boolean; offscreen?: boolean }) {
  return (
    <div
      className={clsx(
        "absolute flex h-[118px] w-9 flex-col items-center rounded-lg border-2 border-[#b8b8b8] bg-white pt-[2px] pr-[2px]",
        offscreen ? "top-[2px] -right-6" : "right-px",
        !offscreen && (flat ? "top-0" : "top-[95px]"),
      )}
    >
      <button type="button" aria-label="Close navigation bar" className="self-end">
        <NavDot />
      </button>
      <button type="button" aria-label="Steering wheel" className="relative mt-[6px]">
        <Icon w={26} h={26}>
          <path d="M3 13a10 10 0 0110-10h8l2 2v8a10 10 0 01-20 0z" fill="#f0f2f3" stroke="#999" strokeWidth="1.500" />
          <circle cx="13" cy="13" r="5" fill="#eaeaea" stroke="#999" strokeWidth="1.300" />
          <path d="M5 18l4-2M21 18l-4-2" stroke="#999" />
        </Icon>
        {flat && <span className="absolute top-[15px] left-[15px] text-[11px] font-bold leading-3 text-[#6d9cc9]">2D</span>}
      </button>
      <span className="mt-1"><Caret color="#888" /></span>
      <span className="mt-[3px] h-px w-[26px] shrink-0 bg-[#ccc]" />
      <button type="button" aria-label="Zoom region" className="mt-[7px]">
        <Icon w={18} h={18}>
          <path d="M1.500 1.500h11v12h-11z" stroke="#999" />
          <circle cx="12" cy="11" r="3" fill="#e4ecec" stroke="#999" />
          <path d="M14 13l3 4" stroke="#999" strokeWidth="1.500" />
        </Icon>
      </button>
      <span className="mt-2"><Caret color="#888" /></span>
      <button type="button" aria-label="Customize" className="mt-[9px] self-end">
        <NavDot minus />
      </button>
    </div>
  )
}

function VerticalScroll({ thumb }: { thumb: string }) {
  return (
    <div className="flex w-4 flex-col items-center">
      <ScrollArrow dir="up" />
      <div className={clsx("flex w-full flex-1", thumb)}>
        <div className="h-[17px] w-[15px] bg-[#cbcbcb]" />
      </div>
      <ScrollArrow dir="down" />
    </div>
  )
}

type Control = [string, ReactNode]

const sectionControls: Control[] = [
  ["Detail Level", <DetailBox />],
  ["Visual Style", <StyleCube />],
  ["Sun Path", <SunOff />],
  ["Shadows", <ShadowOff />],
  ["Crop View", <CropView />],
  ["Show Crop Region", <CropView mark="bulb" />],
  ["Temporary Hide", <Glasses />],
  ["Reveal Hidden Elements", <BlueBulb />],
  ["Temporary View Properties", <Chip />],
  ["Analytical Model", <FrameGrid />],
  ["Reveal Constraints", <Constraints />],
]

const threeDControls: Control[] = [
  ["Detail Level", <CheckerBox />],
  ["Visual Style", <StyleCube />],
  ["Sun Path", <SunOff />],
  ["Shadows", <ShadowOff />],
  ["Rendering", <Teapot />],
  ["Crop View", <CropView mark="x" />],
  ["Show Crop Region", <CropView mark="bulb" />],
  ["Lock View", <HouseLock />],
  ["Temporary Hide", <Glasses />],
  ["Reveal Hidden Elements", <BlueBulb />],
  ["Temporary View Properties", <Chip />],
  ["Analytical Model", <FrameGrid />],
  ["Displacement Sets", <StackedBoxes />],
  ["Reveal Constraints", <Constraints />],
]

const planControls: Control[] = [
  ["Detail Level", <DetailBox />],
  ["Visual Style", <StyleCube plain />],
  ["Sun Path", <SunOff />],
  ["Shadows", <ShadowOff />],
  ["Crop View", <CropView mark="x" />],
  ["Show Crop Region", <CropView mark="bulb" />],
  ["Temporary Hide", <Glasses />],
  ["Reveal Hidden Elements", <BlueBulb />],
  ["Temporary View Properties", <Chip />],
  ["Analytical Model", <FrameGrid lit />],
  ["Reveal Constraints", <Constraints />],
]

function ViewControlBar({ controls, before, after }: { controls: Control[]; before: string; after: string }) {
  return (
    <div className="flex h-[17px] shrink-0 items-center bg-white pl-6">
      <button type="button" className="w-[52px] shrink-0 text-left">
        1 : 100
      </button>
      {controls.map(([label, icon]) => (
        <Tool key={label} label={label} className="w-[21px] shrink-0">
          {icon}
        </Tool>
      ))}
      <ScrollArrow dir="left" />
      <div className="flex h-full flex-1">
        <div className={before} />
        <div className="h-full w-[17px] bg-[#cbcbcb]" />
        <div className={after} />
      </div>
      <ScrollArrow dir="right" />
      <span className="flex w-[17px] justify-center">
        <Icon w={10} h={10}>
          <path d="M7 1h2v2H7zM4 4h2v2H4zM7 4h2v2H7zM1 7h2v2H1zM4 7h2v2H4zM7 7h2v2H7z" fill="#bbb" />
        </Icon>
      </span>
    </div>
  )
}

function ViewTab({ icon, name }: { icon: ReactNode; name: string }) {
  return (
    <div className="flex h-5 shrink-0 items-center justify-between bg-[#cbcbcb] pr-[5px]">
      <button type="button" className="flex h-full w-32 items-center gap-2 bg-[#ebebeb] pl-1 text-[#444]">
        {icon}
        {name}
      </button>
      <button type="button" aria-label={`${name} views`}>
        <Icon w={10} h={9}>
          <path d="M1 1.500h8" stroke="#333" strokeWidth="1.500" />
          <path d="M1 4h8L5 8z" fill="#333" />
        </Icon>
      </button>
    </div>
  )
}

const SectionDrawing = () => (
  <svg width="690" height="400" viewBox="510 156 690 400" className="block max-w-none">
    <path d="M510 489.500H615M655 489.500H917M926 489.500H980M1020 489.500H1198" stroke="#000" />
    <path d="M693.500 233.500H916.500V489.500H693.500z" fill="#70e000" stroke="#000" />
    <path d="M1198.500 484V495" stroke="#0039c0" />
    <g fontFamily="Liberation Sans, Arial, sans-serif" fontSize="36" fill="#000">
      <text x="1046" y="473">Level 1</text>
      <text x="1074" y="532">0 mm</text>
    </g>
  </svg>
)

const ThreeDDrawing = () => (
  <svg width="690" height="399" viewBox="510 599 690 399" fill="none" className="block max-w-none">
    <g stroke="#000" strokeLinejoin="round">
      <path d="M669.500 672.500L915 616l14.500 6L682.500 679z" fill="#7fee14" />
      <path d="M669.500 672.500l13 6.500V1000l-9-3-4-3z" fill="#2f5a05" />
      <path d="M682.500 679l247-57v324L682.500 1003z" fill="#7fff00" />
    </g>
    {/* View cube */}
    <g stroke="#b5b5b5" strokeDasharray="5 2">
      <ellipse cx="1149" cy="666" rx="36" ry="15" />
      <ellipse cx="1149" cy="665" rx="28" ry="11" />
    </g>
    <path d="M1122 672l-6-3 1-3 6 3zM1170 674l-6 3 2-5zM1176 655l-6 3 2-4z" stroke="#aaa" />
    <path d="M1128 662l18 10 26-9v4l-24 8z" fill="#d5d5d5" />
    <g stroke="#777">
      <path d="M1130 635l21-4 17 6-22 4z" fill="#fafafa" />
      <path d="M1130 635l16 6v28l-15-8z" fill="#e6e6e6" />
      <path d="M1146 641l22-4v25l-22 7z" fill="#eee" />
    </g>
    <g fontFamily="Open Sans, sans-serif" fontWeight="700" fill="#8792a3">
      <text x="1132" y="654" fontSize="5">LEFT</text>
      <text x="1149" y="656" fontSize="6">BACK</text>
    </g>
  </svg>
)

const PlanDrawing = () => (
  <svg width="667" height="844" viewBox="1220 154 667 844" className="block max-w-none">
    <path d="M1519 593.500H1782" stroke="#000" />
    <path d="M1781 526h16v68h-16z" fill="#000" />
    <path d="M1534.500 549.500h192v15h-192zM1823.500 650.500h52v6h-52z" fill="#fff" stroke="#000" />
    <path d="M1457 530l63 64h-125z" fill="#0039c0" />
    <circle cx="1458.500" cy="593" r="44" fill="#fff" stroke="#0039c0" />
    <path d="M1395 593.500h125" stroke="#0039c0" />
    <path d="M1456 574h5M1449 610h5.500M1456 610h5.500M1463 610h5.500" stroke="#0039c0" strokeWidth="2" />
    <path d="M1604.500 613.500v16l3.800-3.300 2.700 5.600 2-1-2.600-5.400h5z" fill="#fff" stroke="#223" />
  </svg>
)

function ModelView({ icon, name, flat = false, thumb, grow, children, bar }: {
  icon: ReactNode
  name: string
  flat?: boolean
  thumb: string
  grow: string
  children: ReactNode
  bar: ReactNode
}) {
  return (
    <section className={clsx("flex min-h-0 basis-0 flex-col", grow)}>
      <ViewTab icon={icon} name={name} />
      <div className={clsx("flex min-h-0 flex-1 flex-col border-x-2 border-t-2 border-[#ebebeb] bg-white", flat && "border-b-2")}>
        <div className="flex min-h-0 flex-1">
          <div className="relative min-w-0 flex-1 overflow-hidden">
            {children}
            <NavigationBar flat={flat} />
          </div>
          <VerticalScroll thumb={thumb} />
        </div>
        {bar}
      </div>
    </section>
  )
}

function PlanView() {
  return (
    <section className="relative flex min-w-0 flex-col overflow-hidden bg-white">
      <div className="flex h-5 shrink-0 bg-[#cbcbcb]">
        <div className="flex w-32 items-center bg-white pr-[5px] pl-[5px]">
          <button type="button" className="flex flex-1 items-center gap-[7px] font-semibold text-[#333]">
            <PlanTabIcon />
            Level 1
          </button>
          <button type="button" aria-label="Close Level 1">
            <CloseIcon />
          </button>
        </div>
      </div>
      <div className="relative min-h-0 flex-1 overflow-hidden">
        <PlanDrawing />
        <NavigationBar offscreen />
      </div>
      <div className="pl-[2px]">
        <ViewControlBar controls={planControls} before="flex-[166]" after="flex-[125]" />
      </div>
      <time className="absolute right-0 bottom-0 bg-black px-1 font-['DejaVu_Sans_Mono',monospace] text-[13px] font-bold text-white">
        0:00
      </time>
    </section>
  )
}

export default function App() {
  return (
    <div className="flex h-screen overflow-hidden border-l-8 border-black bg-[#ebebeb] font-['Noto_Sans','Open_Sans',sans-serif] text-[11px] leading-4 text-black">
      <div className="flex min-w-0 flex-1 flex-col">
        <RibbonTabs />
        <Ribbon />
        {/* Options bar */}
        <div className="h-[26px] shrink-0" />
        <main className="grid min-h-0 flex-1 grid-cols-[500px_minmax(0,712fr)_minmax(0,667fr)] grid-rows-[minmax(0,1fr)] border-t-2 border-[#cbcbcb]">
          <aside className="flex flex-col border-r-2 border-[#cbcbcb]">
            <PropertiesPanel />
            <div className="h-[2px] shrink-0 bg-[#cbcbcb]" />
            <ProjectBrowser />
          </aside>
          <div className="flex min-w-0 flex-col border-r-2 border-[#cbcbcb]">
            <ModelView
              icon={<SectionTabIcon />}
              name="Section 1"
              flat
              grow="flex-[441]"
              thumb="pt-[175px]"
              bar={<ViewControlBar controls={sectionControls} before="flex-[166]" after="flex-[166]" />}
            >
              <SectionDrawing />
            </ModelView>
            <div className="h-[2px] shrink-0 bg-[#cbcbcb]" />
            <ModelView
              icon={<HouseTabIcon />}
              name="{3D}"
              grow="flex-[437]"
              thumb="pt-[175px]"
              bar={<ViewControlBar controls={threeDControls} before="flex-[134]" after="flex-[135]" />}
            >
              <ThreeDDrawing />
            </ModelView>
          </div>
          <PlanView />
        </main>
      </div>
    </div>
  )
}
